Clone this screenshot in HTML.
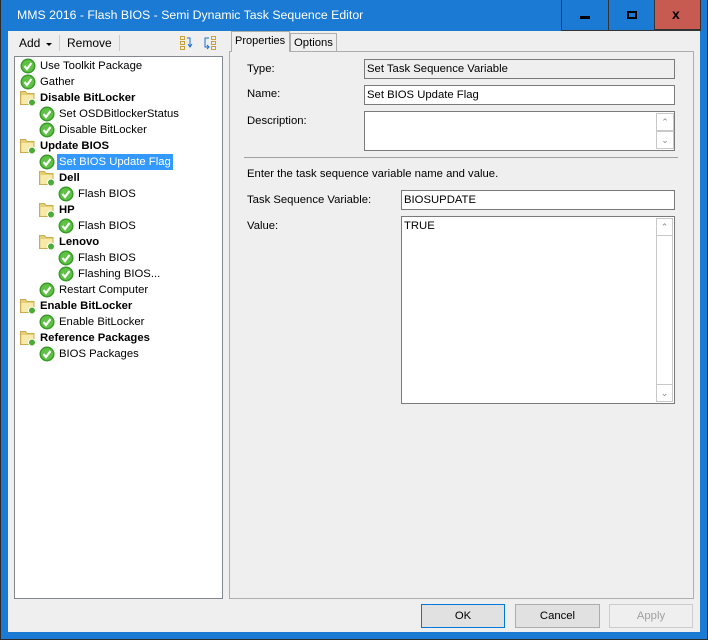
<!DOCTYPE html>
<html><head><meta charset="utf-8"><style>
*{margin:0;padding:0;box-sizing:border-box}
body{width:708px;height:640px;overflow:hidden;font-family:"Liberation Sans",sans-serif;font-size:11.3px;color:#000;background:#2b2b2b;position:relative}
.a{position:absolute}
#win{left:1px;top:0;width:706px;height:639px;background:#1a7ad4}
#client{left:8px;top:31px;width:692px;height:601px;background:#efefef}
.t{white-space:nowrap;line-height:16px}
.box{border:1px solid #7a7a7a;background:#fff}
.ro{border:1px solid #7a7a7a;background:#efefef}
.btn{border:1px solid #adadad;background:#e1e1e1;text-align:center;line-height:22px}
.sb{border:1px solid #c8c8c8;background:#fff;width:18px;height:18px;color:#888;font-size:9px;text-align:center;line-height:16px}
</style></head><body>
<div id="win" class="a"></div>
<div class="a t" style="left:17px;top:7px;color:#fff;font-size:12.3px">MMS 2016 - Flash BIOS - Semi Dynamic Task Sequence Editor</div>
<div class="a" style="left:561px;top:0;width:1px;height:30px;background:#333"></div>
<div class="a" style="left:608px;top:0;width:1px;height:30px;background:#333"></div>
<div class="a" style="left:654px;top:0;width:47px;height:30px;background:#c75b52;border-left:1px solid #333;border-right:1px solid #333;border-bottom:1px solid #333"></div>
<div class="a" style="left:561px;top:30px;width:140px;height:1px;background:#333"></div>
<div class="a" style="left:580px;top:16px;width:10px;height:3px;background:#000"></div>
<div class="a" style="left:627px;top:11px;width:10px;height:8px;border:2px solid #000"></div>
<div class="a" style="left:672px;top:6px;font-weight:bold;font-size:14px;line-height:16px">x</div>
<div id="client" class="a"></div>

<!-- toolbar -->
<div class="a t" style="left:19px;top:35px;font-size:12px">Add</div>
<div class="a" style="left:46px;top:43px;width:0;height:0;border-left:3px solid transparent;border-right:3px solid transparent;border-top:3px solid #000"></div>
<div class="a" style="left:59px;top:35px;width:1px;height:16px;background:#ccc"></div>
<div class="a t" style="left:67px;top:35px;font-size:12px">Remove</div>
<div class="a" style="left:119px;top:35px;width:1px;height:16px;background:#ccc"></div>
<svg class="a" style="left:178px;top:34px" width="40" height="18">
<g fill="none" stroke="#c9a13b"><rect x="2.5" y="2.5" width="4" height="3"/><rect x="2.5" y="7.5" width="4" height="3"/><rect x="2.5" y="12.5" width="4" height="3"/></g>
<path d="M9 4h3v8M10 10l2 3 2-3" fill="none" stroke="#1a6bd1"/>
<path d="M31 4h-4v9h3M29 11l2 2-2 2" fill="none" stroke="#1a6bd1"/>
<g fill="none" stroke="#c9a13b"><rect x="33.5" y="2.5" width="4" height="3"/><rect x="33.5" y="7.5" width="4" height="3"/><rect x="33.5" y="12.5" width="4" height="3"/></g>
</svg>

<!-- tree -->
<div class="a box" style="left:14px;top:56px;width:209px;height:543px;border-color:#828790"></div>
<svg width="0" height="0" style="position:absolute"><defs>
<g id="ck"><circle cx="8" cy="8" r="7.5" fill="#3a9a2a"/><circle cx="8" cy="8" r="6" fill="#5fc245"/><path d="M4.5 8l2.5 3 4.5-6" fill="none" stroke="#fff" stroke-width="2.2"/></g>
<g id="fd"><path d="M0.5 1.5h5l1.5 2h7v11h-13.5z" fill="#e6cf73" stroke="#c9ad52"/><rect x="1.5" y="5" width="12" height="9" fill="#f7e9a8"/><circle cx="12" cy="12.5" r="3.5" fill="#4bab36" stroke="#fff"/></g>
</defs></svg>
<div id="tree">
</div>
<script>
var items=[[0,'c','Use Toolkit Package'],[0,'c','Gather'],[0,'f','Disable BitLocker'],[1,'c','Set OSDBitlockerStatus'],[1,'c','Disable BitLocker'],[0,'f','Update BIOS'],[1,'c','Set BIOS Update Flag',1],[1,'f','Dell'],[2,'c','Flash BIOS'],[1,'f','HP'],[2,'c','Flash BIOS'],[1,'f','Lenovo'],[2,'c','Flash BIOS'],[2,'c','Flashing BIOS...'],[1,'c','Restart Computer'],[0,'f','Enable BitLocker'],[1,'c','Enable BitLocker'],[0,'f','Reference Packages'],[1,'c','BIOS Packages']];
var h='';items.forEach(function(it,i){var y=58+i*16,x=20+it[0]*19;
h+='<svg class="a" style="left:'+x+'px;top:'+y+'px" width="16" height="16"><use href="#'+(it[1]=='c'?'ck':'fd')+'"/></svg>';
var st=it[1]=='f'?'font-weight:bold;':'';
if(it[3])st+='background:#3399ff;color:#fff;padding:0 2px;margin-left:-2px;';
h+='<div class="a t" style="left:'+(x+20)+'px;top:'+y+'px;'+st+'">'+it[2]+'</div>';});
document.getElementById('tree').innerHTML=h;
</script>

<!-- tabs -->
<div class="a" style="left:229px;top:51px;width:465px;height:548px;border:1px solid #adadad;background:#efefef"></div>
<div class="a" style="left:290px;top:33px;width:47px;height:19px;border:1px solid #adadad;background:#efefef"></div>
<div class="a t" style="left:294px;top:35px">Options</div>
<div class="a" style="left:231px;top:31px;width:59px;height:21px;border:1px solid #adadad;border-bottom:none;background:#efefef"></div>
<div class="a t" style="left:235px;top:33px;font-size:11px">Properties</div>

<div class="a t" style="left:247px;top:61px">Type:</div>
<div class="a ro" style="left:364px;top:59px;width:311px;height:20px"></div>
<div class="a t" style="left:367px;top:61px">Set Task Sequence Variable</div>
<div class="a t" style="left:247px;top:86px">Name:</div>
<div class="a box" style="left:364px;top:85px;width:311px;height:20px"></div>
<div class="a t" style="left:367px;top:87px">Set BIOS Update Flag</div>
<div class="a t" style="left:247px;top:113px">Description:</div>
<div class="a box" style="left:364px;top:111px;width:311px;height:40px"></div>
<div class="a sb" style="left:656px;top:113px">&#8963;</div>
<div class="a sb" style="left:656px;top:131px">&#8964;</div>
<div class="a" style="left:244px;top:157px;width:434px;height:1px;background:#a0a0a0"></div>
<div class="a t" style="left:247px;top:166px">Enter the task sequence variable name and value.</div>
<div class="a t" style="left:247px;top:192px">Task Sequence Variable:</div>
<div class="a box" style="left:401px;top:190px;width:274px;height:20px"></div>
<div class="a t" style="left:404px;top:192px">BIOSUPDATE</div>
<div class="a t" style="left:247px;top:218px">Value:</div>
<div class="a box" style="left:401px;top:216px;width:274px;height:188px"></div>
<div class="a t" style="left:404px;top:218px">TRUE</div>
<div class="a" style="left:656px;top:218px;width:17px;height:184px;border:1px solid #c8c8c8;background:#fff"></div>
<div class="a sb" style="left:656px;top:218px;width:17px">&#8963;</div>
<div class="a sb" style="left:656px;top:384px;width:17px">&#8964;</div>

<!-- buttons -->
<div class="a btn" style="left:421px;top:604px;width:84px;height:24px;border-color:#0078d7">OK</div>
<div class="a btn" style="left:515px;top:604px;width:85px;height:24px">Cancel</div>
<div class="a btn" style="left:609px;top:604px;width:84px;height:24px;background:#efefef;border-color:#ccc;color:#a0a0a0">Apply</div>
</body></html>
